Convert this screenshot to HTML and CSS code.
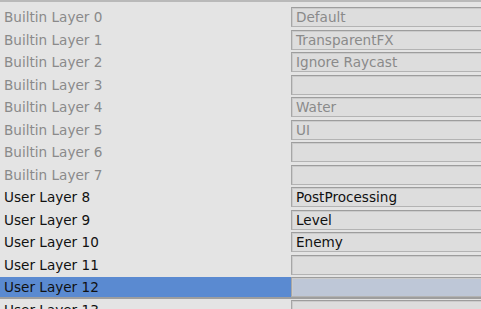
FILE: index.html
```html
<!DOCTYPE html>
<html lang='en'>
<head>
<meta charset='UTF-8'>
<title>Tags &amp; Layers</title>
<link rel="stylesheet" href="styles.css">
</head>
<body>
  <div class='topline'></div>
  <main class='layers'>
    <div class='row builtin'><span class='label'>Builtin Layer 0</span><span class='field'>Default</span></div>
    <div class='row builtin'><span class='label'>Builtin Layer 1</span><span class='field'>TransparentFX</span></div>
    <div class='row builtin'><span class='label'>Builtin Layer 2</span><span class='field'>Ignore Raycast</span></div>
    <div class='row builtin'><span class='label'>Builtin Layer 3</span><span class='field'></span></div>
    <div class='row builtin'><span class='label'>Builtin Layer 4</span><span class='field'>Water</span></div>
    <div class='row builtin'><span class='label'>Builtin Layer 5</span><span class='field'>UI</span></div>
    <div class='row builtin'><span class='label'>Builtin Layer 6</span><span class='field'></span></div>
    <div class='row builtin'><span class='label'>Builtin Layer 7</span><span class='field'></span></div>
    <div class='row'><span class='label'>User Layer 8</span><span class='field'>PostProcessing</span></div>
    <div class='row'><span class='label'>User Layer 9</span><span class='field'>Level</span></div>
    <div class='row'><span class='label'>User Layer 10</span><span class='field'>Enemy</span></div>
    <div class='row'><span class='label'>User Layer 11</span><span class='field'></span></div>
    <div class='row selected'><span class='label'>User Layer 12</span><span class='field'></span></div>
    <div class='row'><span class='label'>User Layer 13</span><span class='field'></span></div>
  </main>
</body>
</html>
```

FILE: styles.css
```css
/* ---------- Tags & Layers inspector ---------- */
:root{
  --bg:#e4e4e4;
  --field:#dddddd;
  --text:#111111;
  --muted:#8a8a8a;
  --select:#5a8ad1;
  --select-field:#bec7d7;
}
*{box-sizing:border-box;margin:0;padding:0;}
html,body{height:100%;overflow:hidden;}
body{
  background:var(--bg);color:var(--text);
  font-family:'DejaVu Sans',Verdana,sans-serif;font-size:13.6px;
}
.topline{height:2px;background:#b9b9b9;}
.layers{display:flex;flex-direction:column;gap:2.5px;padding-top:5px;}
.row{display:flex;height:20px;align-items:stretch;}
.label{
  flex:0 0 291px;padding-left:4px;line-height:20px;white-space:nowrap;
}
.field{
  flex:1;background:var(--field);line-height:18px;padding-left:4px;white-space:nowrap;
  border:1px solid #b3b3b3;border-right:0;border-top-color:#9d9d9d;border-left-color:#a6a6a6;
  box-shadow:inset 1px 1px 0 #cbcbcb;
}
.builtin .label,.builtin .field{color:var(--muted);}
.selected{box-shadow:0 2px 0 #9e9e9e;}
.selected .label{background:var(--select);}
.selected .field{background:var(--select-field);}
```
